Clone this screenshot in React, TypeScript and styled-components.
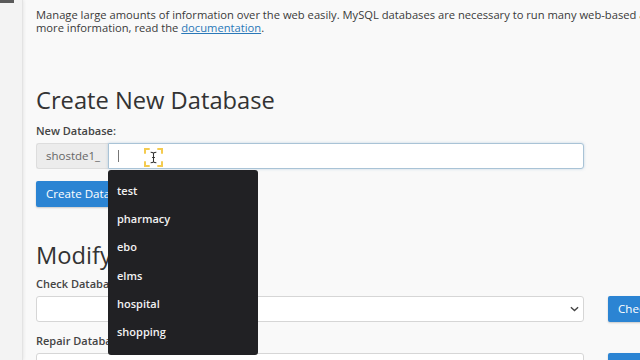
import * as React from "react";
import styled, { createGlobalStyle } from "styled-components";

const GlobalStyle = createGlobalStyle`
  html, body {
    margin: 0;
    padding: 0;
    background: #f9f9f9;
    overflow: hidden;
  }
  body {
    font-family: "Open Sans", "Liberation Sans", sans-serif;
    color: #333;
  }
`;

const suggestions = ["test", "pharmacy", "ebo", "elms", "hospital", "shopping"];

export default function App(): JSX.Element {
  return (
    <>
      <GlobalStyle />
      <Page>
        <Sidebar>
          <SidebarTab />
        </Sidebar>
        <Main>
          <Intro>
            Manage large amounts of information over the web easily. MySQL
            databases are necessary to run many web-based applications, such as
            bulletin boards, content management systems, and online retail
            shops. For
            <br />
            more information, read the <DocLink href="#">documentation</DocLink>.
          </Intro>

          <Heading $top={52}>Create New Database</Heading>
          <FieldLabel $top={8}>New Database:</FieldLabel>
          <InputGroup>
            <Prefix>shostde1_</Prefix>
            <InputWrap>
              <TextInput>
                <Caret />
              </TextInput>
              <MouseCursor viewBox="0 0 20 20">
                <path d="M1 6V1h5M14 1h5v5M19 14v5h-5M6 19H1v-5" fill="none" stroke="#f2c230" strokeWidth="2.2" opacity="0.85" />
                <path d="M7 4.5c1.5 0 2.4.4 3 1 .6-.6 1.5-1 3-1M10 5.5v9M7 15.5c1.5 0 2.4-.4 3-1 .6.6 1.5 1 3 1M8.5 10h3" fill="none" stroke="#333" strokeWidth="1.1" />
              </MouseCursor>
              <Suggestions>
                {suggestions.map((s) => (
                  <SuggestionItem key={s}>{s}</SuggestionItem>
                ))}
              </Suggestions>
            </InputWrap>
          </InputGroup>
          <PrimaryButton $top={12}>Create Database</PrimaryButton>

          <Heading $top={34}>Modify Databases</Heading>
          <FieldLabel $top={6}>Check Database:</FieldLabel>
          <SelectRow>
            <SelectBox>
              <Chevron viewBox="0 0 10 6">
                <path d="M1 1l4 3.6L9 1" fill="none" stroke="#444" strokeWidth="1.6" />
              </Chevron>
            </SelectBox>
            <PrimaryButton $top={0}>Check Database</PrimaryButton>
          </SelectRow>
          <FieldLabel $top={11}>Repair Database:</FieldLabel>
          <SelectRow>
            <SelectBox>
              <Chevron viewBox="0 0 10 6">
                <path d="M1 1l4 3.6L9 1" fill="none" stroke="#444" strokeWidth="1.6" />
              </Chevron>
            </SelectBox>
            <PrimaryButton $top={0}>Repair Database</PrimaryButton>
          </SelectRow>
        </Main>
      </Page>
    </>
  );
}

const Page = styled.div`
  display: flex;
  width: 640px;
  height: 360px;
  overflow: hidden;
`;

const Sidebar = styled.aside`
  flex: 0 0 22px;
  background: #f3f3f3;
  border-right: 1px solid #e3e3e3;
  box-shadow: 1px 0 3px rgba(0, 0, 0, 0.07);
`;

const SidebarTab = styled.div`
  width: 14px;
  height: 3px;
  background: #5a5a5a;
`;

const Main = styled.main`
  flex: 1;
  padding: 8px 0 0 13px;
  min-width: 0;
`;

const Intro = styled.p`
  margin: 0;
  font-size: 11.2px;
  line-height: 13px;
  white-space: nowrap;
  color: #3a3a3a;
`;

const DocLink = styled.a`
  color: #2a78b8;
  text-decoration: underline;
`;

const Heading = styled.h2<{ $top: number }>`
  margin: ${(p) => p.$top}px 0 0;
  font-size: 23.7px;
  line-height: 28.8px;
  font-weight: 400;
  color: #333;
  white-space: nowrap;
`;

const FieldLabel = styled.div<{ $top: number }>`
  margin-top: ${(p) => p.$top}px;
  font-size: 11px;
  line-height: 15px;
  font-weight: 600;
  color: #444;
`;

const InputGroup = styled.div`
  display: flex;
  width: 548px;
  height: 26px;
  margin-top: 5px;
`;

const Prefix = styled.div`
  flex: 0 0 72px;
  display: flex;
  align-items: center;
  padding-left: 9px;
  box-sizing: border-box;
  background: #ececec;
  border: 1px solid #ddd;
  border-right: none;
  border-radius: 3px 0 0 3px;
  font-size: 11.5px;
  color: #666;
`;

const InputWrap = styled.div`
  position: relative;
  flex: 1;
`;

const TextInput = styled.div`
  height: 100%;
  box-sizing: border-box;
  background: #fff;
  border: 1px solid #a9c3d6;
  border-radius: 0 3px 3px 0;
  box-shadow: 0 0 3px rgba(100, 150, 190, 0.35);
  display: flex;
  align-items: center;
  padding-left: 9px;
`;

const Caret = styled.span`
  display: block;
  width: 1px;
  height: 12px;
  background: #777;
`;

const MouseCursor = styled.svg`
  position: absolute;
  left: 36px;
  top: 5px;
  width: 19px;
  height: 19px;
`;

const Suggestions = styled.ul`
  position: absolute;
  left: 0;
  top: 27px;
  width: 150px;
  margin: 0;
  padding: 7px 0 8px;
  list-style: none;
  background: #212124;
  border-radius: 3px;
  z-index: 2;
`;

const SuggestionItem = styled.li`
  height: 28.3px;
  line-height: 28px;
  padding-left: 9px;
  font-size: 11px;
  font-weight: 600;
  color: #f2f2f2;
`;

const PrimaryButton = styled.button<{ $top: number }>`
  margin-top: ${(p) => p.$top}px;
  height: 26px;
  padding: 0 10px;
  border: none;
  border-radius: 2px;
  background: #2b84d3;
  box-shadow: 0 1px 2px rgba(0, 0, 0, 0.2);
  color: #fff;
  font-family: "Open Sans", "Liberation Sans", sans-serif;
  font-size: 11.6px;
  white-space: nowrap;
  flex-shrink: 0;
`;

const SelectRow = styled.div`
  display: flex;
  gap: 24px;
  margin-top: 5px;
`;

const SelectBox = styled.div`
  flex: 0 0 548px;
  height: 26px;
  box-sizing: border-box;
  background: #fff;
  border: 1px solid #d6d6d6;
  border-radius: 3px;
  display: flex;
  align-items: center;
  justify-content: flex-end;
  padding-right: 4px;
`;

const Chevron = styled.svg`
  width: 9px;
  height: 6px;
`;
